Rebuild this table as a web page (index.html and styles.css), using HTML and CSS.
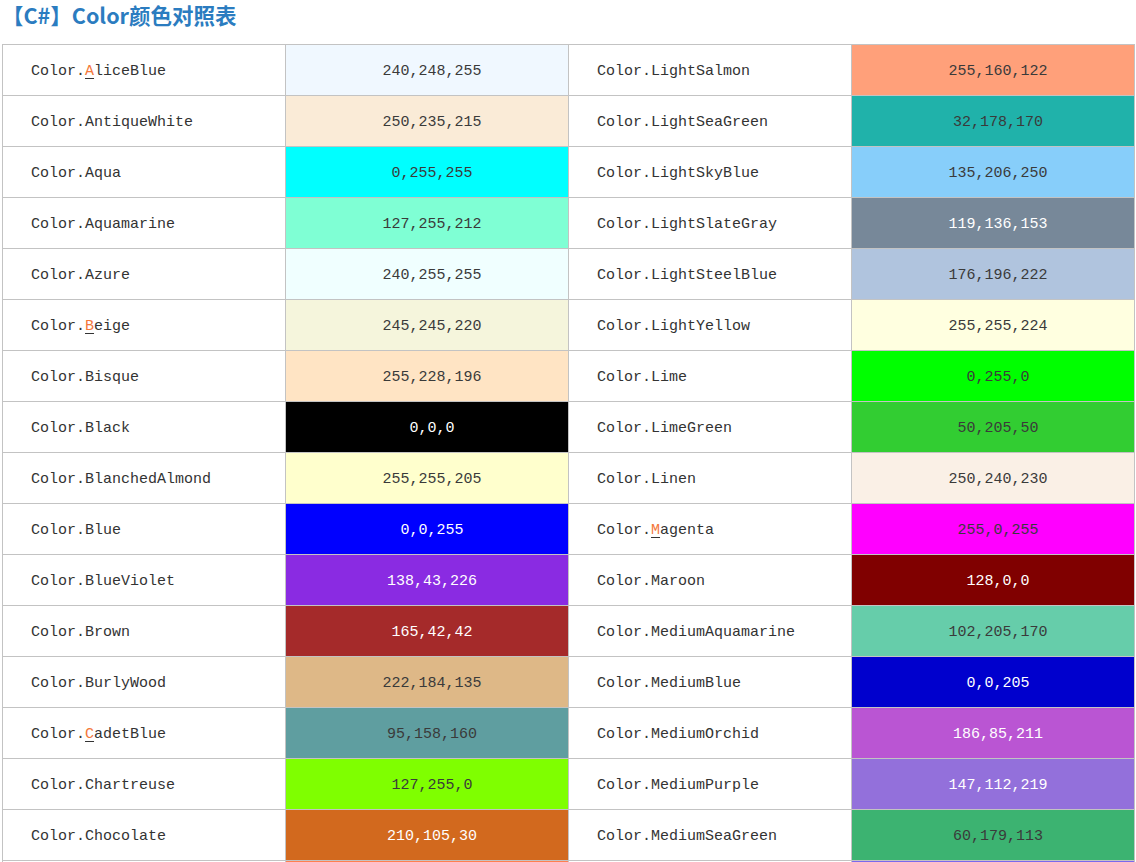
FILE: index.html
```html
<!DOCTYPE html>
<html lang="zh-CN">
<head>
<meta charset="utf-8">
<title>【C#】Color颜色对照表</title>
<link rel="stylesheet" href="styles.css">
</head>
<body>
<h1 class="title">【C#】Color颜色对照表</h1>
<table class="colors">
<tbody>
<tr><td class="name">Color.<a class="idx">A</a>liceBlue</td><td class="val" style="background:rgb(240,248,255)">240,248,255</td><td class="name">Color.LightSalmon</td><td class="val" style="background:rgb(255,160,122)">255,160,122</td></tr>
<tr><td class="name">Color.AntiqueWhite</td><td class="val" style="background:rgb(250,235,215)">250,235,215</td><td class="name">Color.LightSeaGreen</td><td class="val" style="background:rgb(32,178,170)">32,178,170</td></tr>
<tr><td class="name">Color.Aqua</td><td class="val" style="background:rgb(0,255,255)">0,255,255</td><td class="name">Color.LightSkyBlue</td><td class="val" style="background:rgb(135,206,250)">135,206,250</td></tr>
<tr><td class="name">Color.Aquamarine</td><td class="val" style="background:rgb(127,255,212)">127,255,212</td><td class="name">Color.LightSlateGray</td><td class="val light" style="background:rgb(119,136,153)">119,136,153</td></tr>
<tr><td class="name">Color.Azure</td><td class="val" style="background:rgb(240,255,255)">240,255,255</td><td class="name">Color.LightSteelBlue</td><td class="val" style="background:rgb(176,196,222)">176,196,222</td></tr>
<tr><td class="name">Color.<a class="idx">B</a>eige</td><td class="val" style="background:rgb(245,245,220)">245,245,220</td><td class="name">Color.LightYellow</td><td class="val" style="background:rgb(255,255,224)">255,255,224</td></tr>
<tr><td class="name">Color.Bisque</td><td class="val" style="background:rgb(255,228,196)">255,228,196</td><td class="name">Color.Lime</td><td class="val" style="background:rgb(0,255,0)">0,255,0</td></tr>
<tr><td class="name">Color.Black</td><td class="val light" style="background:rgb(0,0,0)">0,0,0</td><td class="name">Color.LimeGreen</td><td class="val" style="background:rgb(50,205,50)">50,205,50</td></tr>
<tr><td class="name">Color.BlanchedAlmond</td><td class="val" style="background:rgb(255,255,205)">255,255,205</td><td class="name">Color.Linen</td><td class="val" style="background:rgb(250,240,230)">250,240,230</td></tr>
<tr><td class="name">Color.Blue</td><td class="val light" style="background:rgb(0,0,255)">0,0,255</td><td class="name">Color.<a class="idx">M</a>agenta</td><td class="val" style="background:rgb(255,0,255)">255,0,255</td></tr>
<tr><td class="name">Color.BlueViolet</td><td class="val light" style="background:rgb(138,43,226)">138,43,226</td><td class="name">Color.Maroon</td><td class="val light" style="background:rgb(128,0,0)">128,0,0</td></tr>
<tr><td class="name">Color.Brown</td><td class="val light" style="background:rgb(165,42,42)">165,42,42</td><td class="name">Color.MediumAquamarine</td><td class="val" style="background:rgb(102,205,170)">102,205,170</td></tr>
<tr><td class="name">Color.BurlyWood</td><td class="val" style="background:rgb(222,184,135)">222,184,135</td><td class="name">Color.MediumBlue</td><td class="val light" style="background:rgb(0,0,205)">0,0,205</td></tr>
<tr><td class="name">Color.<a class="idx">C</a>adetBlue</td><td class="val" style="background:rgb(95,158,160)">95,158,160</td><td class="name">Color.MediumOrchid</td><td class="val light" style="background:rgb(186,85,211)">186,85,211</td></tr>
<tr><td class="name">Color.Chartreuse</td><td class="val" style="background:rgb(127,255,0)">127,255,0</td><td class="name">Color.MediumPurple</td><td class="val light" style="background:rgb(147,112,219)">147,112,219</td></tr>
<tr><td class="name">Color.Chocolate</td><td class="val light" style="background:rgb(210,105,30)">210,105,30</td><td class="name">Color.MediumSeaGreen</td><td class="val" style="background:rgb(60,179,113)">60,179,113</td></tr>
<tr><td class="name">Color.Coral</td><td class="val" style="background:rgb(255,127,80)">255,127,80</td><td class="name">Color.MediumSlateBlue</td><td class="val light" style="background:rgb(123,104,238)">123,104,238</td></tr>
</tbody>
</table>
</body>
</html>
```

FILE: styles.css
```css
html, body {
  margin: 0;
  padding: 0;
  background: #ffffff;
}

body {
  padding: 0 2px;
  font-family: "Liberation Mono", "DejaVu Sans Mono", monospace;
  color: #333333;
}

.title {
  margin: 0;
  font-family: "Noto Sans CJK SC", "Noto Sans", sans-serif;
  font-size: 21.5px;
  line-height: 30px;
  font-weight: 700;
  color: #2b7cc0;
}

.colors {
  margin-top: 14px;
  width: 1133px;
  border-collapse: collapse;
  table-layout: fixed;
}

.colors td {
  height: 46px;
  padding: 4px 0 0 0;
  border: 1px solid #c3c3c3;
  font-size: 15px;
  line-height: 20px;
  vertical-align: middle;
  white-space: nowrap;
}

.colors td.name {
  padding-left: 28px;
  background: #ffffff;
  color: #333333;
}

.colors td.val {
  padding-left: 10px;
  text-align: center;
  color: #3a3a3a;
}

.colors td.val.light {
  color: #ffffff;
}

.idx {
  color: #f4773a;
  text-decoration: underline;
  text-decoration-color: #333333;
  text-underline-offset: 3px;
}
```
